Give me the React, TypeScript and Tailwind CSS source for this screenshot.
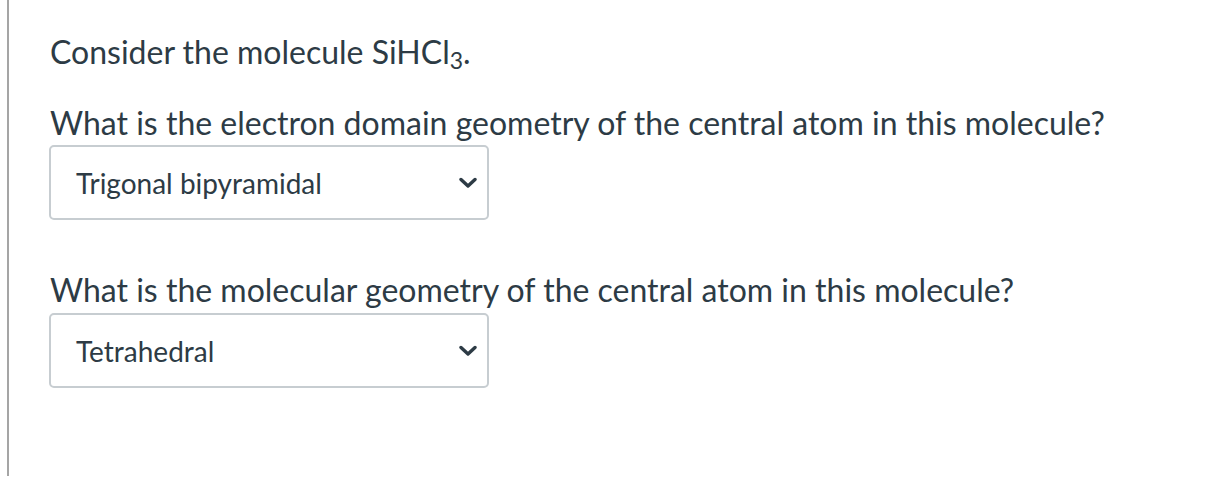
function Chevron() {
  return (
    <svg width="18" height="12" viewBox="0 0 18 12" className="text-[#2d3b45]">
      <path d="M2 2.5 L9 9 L16 2.5" fill="none" stroke="currentColor" strokeWidth="3.4" strokeLinecap="round" strokeLinejoin="round" />
    </svg>
  );
}

function Select({ value }: { value: string }) {
  return (
    <div className="-ml-px flex h-[75px] w-[440px] items-center justify-between rounded-[5px] border-2 border-[#c7cdd1] bg-white pl-[25px] pr-[10px]">
      <span className="text-[28px] leading-none text-[#2d3b45]">{value}</span>
      <Chevron />
    </div>
  );
}

export default function App() {
  return (
    <div className="h-[477px] w-[1223px] bg-white font-['Lato',sans-serif] text-[#2d3b45]">
      <div className="ml-[7px] h-[476px] border-l-2 border-[#a5a5a5] pl-[41px] pt-[30px]">
        <p className="text-[32px] leading-[44px]">
          Consider the molecule SiHCl<span className="relative top-[5px] text-[23px]">3</span>.
        </p>
        <p className="mt-[24px] text-[32px] leading-[44px]">
          What is the electron domain geometry of the central atom in this molecule?
        </p>
        <Select value="Trigonal bipyramidal" />
        <p className="mt-[48px] text-[32px] leading-[44px]">
          What is the molecular geometry of the central atom in this molecule?
        </p>
        <div className="mt-px">
          <Select value="Tetrahedral" />
        </div>
      </div>
    </div>
  );
}
